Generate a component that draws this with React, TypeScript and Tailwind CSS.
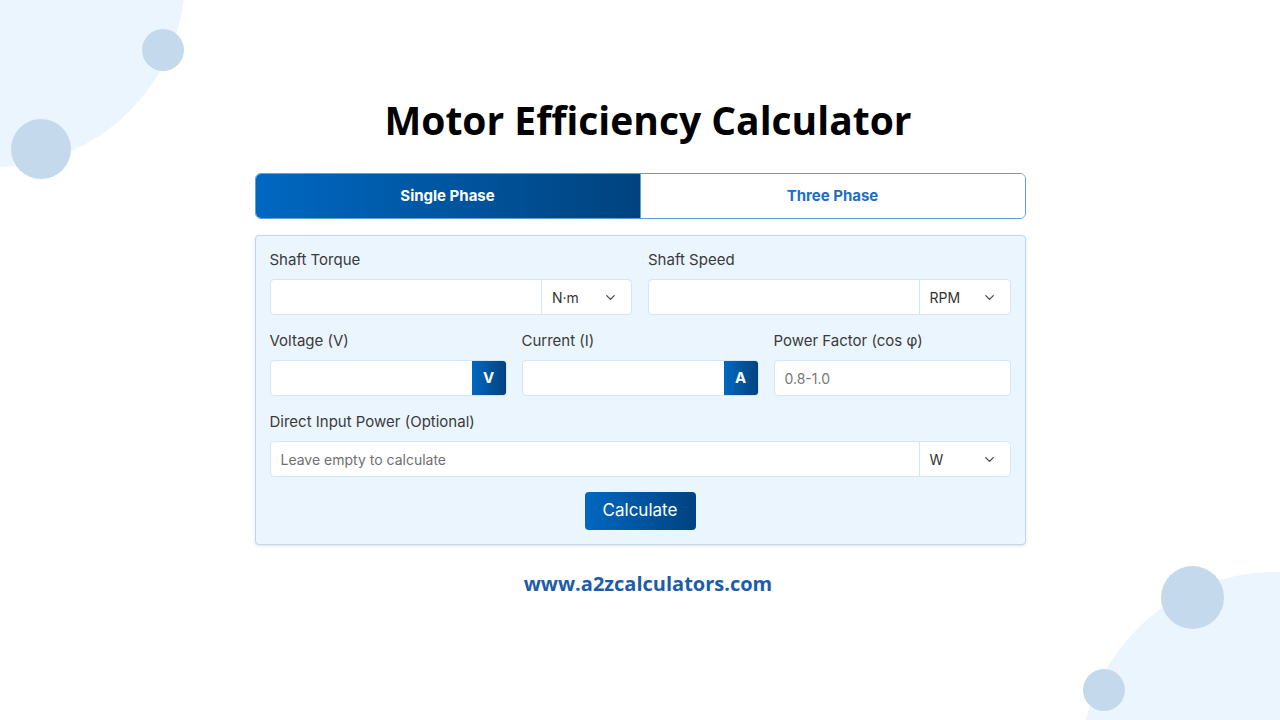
import { ChevronDown } from "lucide-react"

function UnitSelect({ unit, width }: { unit: string; width: string }) {
  return (
    <div className={`${width} flex items-center justify-between border-l border-[#d3e6f7] pl-[10px] pr-[13px] text-[14px] text-[#333]`}>
      <span>{unit}</span>
      <ChevronDown className="h-[15px] w-[15px] text-[#444]" strokeWidth={2} />
    </div>
  )
}

function Label({ children }: { children: React.ReactNode }) {
  return <div className="mb-[9px] h-[20px] text-[15px] leading-[20px] text-[#3a3a3a]">{children}</div>
}

export default function App() {
  return (
    <div className="relative h-[720px] w-[1280px] overflow-hidden bg-white" style={{ fontFamily: "Inter, 'Noto Sans', sans-serif" }}>
      {/* background decoration */}
      <div className="absolute left-[-195px] top-[-213px] h-[380px] w-[380px] rounded-full bg-[#ebf5fe]" />
      <div className="absolute left-[142px] top-[29px] h-[42px] w-[42px] rounded-full bg-[#c4d9ec]" />
      <div className="absolute left-[11px] top-[119px] h-[60px] w-[60px] rounded-full bg-[#c4d9ec]" />
      <div className="absolute left-[1080px] top-[572px] h-[390px] w-[390px] rounded-full bg-[#ebf5fe]" />
      <div className="absolute left-[1161px] top-[566px] h-[63px] w-[63px] rounded-full bg-[#c4d9ec]" />
      <div className="absolute left-[1083px] top-[669px] h-[42px] w-[42px] rounded-full bg-[#c4d9ec]" />

      <div className="relative flex flex-col items-center pt-[94px]">
        <h1 className="ml-[16px] h-[52px] text-[39px] font-bold leading-[52px] text-black" style={{ fontFamily: "'Open Sans', sans-serif" }}>
          Motor Efficiency Calculator
        </h1>

        <div className="mt-[27px] flex h-[46px] w-[771px] overflow-hidden rounded-[6px] border border-[#5f9fd8]">
          <div className="flex flex-1 items-center justify-center bg-gradient-to-r from-[#0068c2] to-[#00437f] text-[15px] font-bold text-white">
            Single Phase
          </div>
          <div className="flex flex-1 items-center justify-center border-l border-[#5f9fd8] bg-white text-[15px] font-bold text-[#1c6fc2]">
            Three Phase
          </div>
        </div>

        <div className="mt-[16px] w-[771px] rounded-[4px] border border-[#bcd8ef] bg-[#ebf5fe] px-[14px] pb-[14px] pt-[14px] shadow-[0_1px_3px_rgba(0,0,0,0.12)]">
          <div className="grid grid-cols-2 gap-x-[16px]">
            <div>
              <Label>Shaft Torque</Label>
              <div className="flex h-[36px] rounded-[4px] border border-[#d3e6f7] bg-white">
                <div className="flex-1" />
                <UnitSelect unit="N·m" width="w-[90px]" />
              </div>
            </div>
            <div>
              <Label>Shaft Speed</Label>
              <div className="flex h-[36px] rounded-[4px] border border-[#d3e6f7] bg-white">
                <div className="flex-1" />
                <UnitSelect unit="RPM" width="w-[91px]" />
              </div>
            </div>
          </div>

          <div className="mt-[16px] grid grid-cols-3 gap-x-[15px]">
            <div>
              <Label>Voltage (V)</Label>
              <div className="flex h-[36px] overflow-hidden rounded-[4px] border border-[#d3e6f7] bg-white">
                <div className="flex-1" />
                <div className="flex w-[34px] items-center justify-center bg-gradient-to-r from-[#0068c2] to-[#00437f] text-[15px] font-bold text-white">V</div>
              </div>
            </div>
            <div>
              <Label>Current (I)</Label>
              <div className="flex h-[36px] overflow-hidden rounded-[4px] border border-[#d3e6f7] bg-white">
                <div className="flex-1" />
                <div className="flex w-[34px] items-center justify-center bg-gradient-to-r from-[#0068c2] to-[#00437f] text-[15px] font-bold text-white">A</div>
              </div>
            </div>
            <div>
              <Label>Power Factor (cos φ)</Label>
              <div className="flex h-[36px] items-center rounded-[4px] border border-[#d3e6f7] bg-white px-[10px] text-[14px] text-[#777]">
                0.8-1.0
              </div>
            </div>
          </div>

          <div className="mt-[16px]">
            <Label>Direct Input Power (Optional)</Label>
            <div className="flex h-[36px] rounded-[4px] border border-[#d3e6f7] bg-white">
              <div className="flex flex-1 items-center px-[10px] text-[14px] text-[#6f6f6f]">Leave empty to calculate</div>
              <UnitSelect unit="W" width="w-[91px]" />
            </div>
          </div>

          <div className="mt-[15px] flex justify-center">
            <button className="h-[38px] w-[111px] rounded-[4px] bg-gradient-to-r from-[#0068c2] to-[#00437f] text-[17px] text-white">
              Calculate
            </button>
          </div>
        </div>

        <div className="ml-[16px] mt-[24px] text-[20px] font-bold text-[#1d5ca6]" style={{ fontFamily: "'Open Sans', sans-serif" }}>
          www.a2zcalculators.com
        </div>
      </div>
    </div>
  )
}
